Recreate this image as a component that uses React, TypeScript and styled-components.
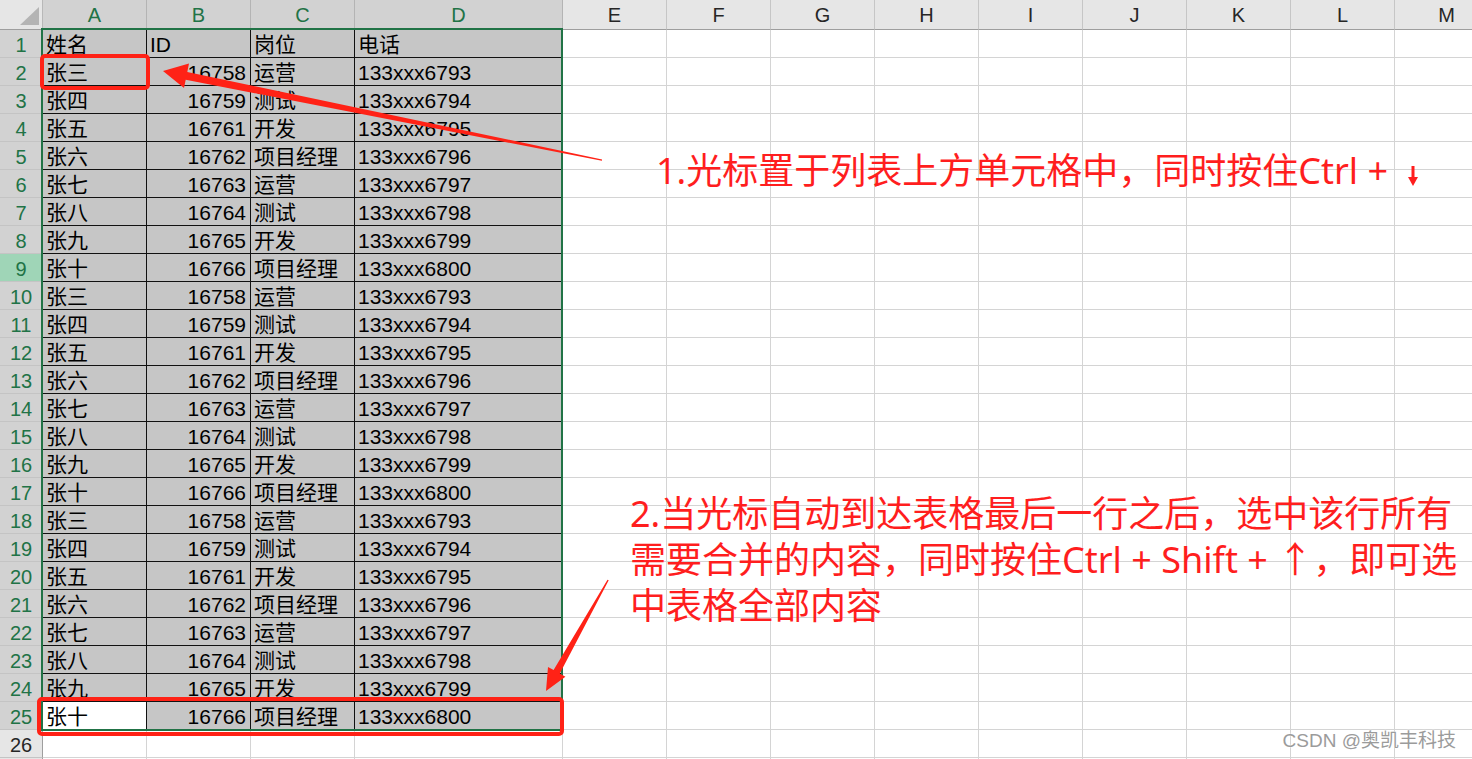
import React from 'react';
import styled, { createGlobalStyle } from 'styled-components';

const GlobalStyle = createGlobalStyle`
  html, body {
    margin: 0;
    padding: 0;
    background: #ffffff;
    overflow: hidden;
  }
  body {
    font-family: "Liberation Sans", "Noto Sans CJK SC", sans-serif;
  }
`;

const GREEN = '#217346';
const RED = '#ff2216';

const Page = styled.div`
  position: relative;
  width: 1472px;
  height: 759px;
  overflow: hidden;
  background: #ffffff;
`;

const Sheet = styled.div`
  display: grid;
  grid-template-columns: 43px 104px 104px 104px 208px repeat(10, 104px);
  grid-template-rows: 30px repeat(27, 28px);
  font-size: 21px;
  color: #000;
`;

const Corner = styled.div`
  box-sizing: border-box;
  background: #e6e6e6;
  border-right: 1px solid #b8b8b8;
  border-bottom: 1px solid #9e9e9e;
  display: flex;
  align-items: flex-end;
  justify-content: flex-end;
  padding: 0 3px 4px 0;
`;

const ColHeader = styled.div<{ $selected?: boolean }>`
  box-sizing: border-box;
  background: ${(p) => (p.$selected ? '#d2d2d2' : '#e6e6e6')};
  color: ${(p) => (p.$selected ? GREEN : '#262626')};
  border-right: 1px solid ${(p) => (p.$selected ? '#b4b4b4' : '#c6c6c6')};
  border-bottom: 1px solid #9e9e9e;
  display: flex;
  align-items: center;
  justify-content: center;
  padding-top: 2px;
  font-size: 20px;
`;

const RowHeader = styled.div<{ $selected?: boolean; $hover?: boolean }>`
  box-sizing: border-box;
  background: ${(p) => (p.$hover ? '#9fd5b7' : p.$selected ? '#d2d2d2' : '#e6e6e6')};
  color: ${(p) => (p.$selected ? GREEN : '#262626')};
  border-right: 1px solid #9e9e9e;
  border-bottom: 1px solid #c4c4c4;
  display: flex;
  align-items: center;
  justify-content: center;
  padding-top: 3px;
  font-size: 20px;
`;

const Cell = styled.div<{ $selected?: boolean; $active?: boolean; $right?: boolean }>`
  box-sizing: border-box;
  background: ${(p) => (p.$active ? '#ffffff' : p.$selected ? '#c6c6c6' : '#ffffff')};
  border-right: 1px solid ${(p) => (p.$selected ? '#111111' : '#d4d4d4')};
  border-bottom: 1px solid ${(p) => (p.$selected ? '#111111' : '#d4d4d4')};
  display: flex;
  align-items: flex-end;
  justify-content: ${(p) => (p.$right ? 'flex-end' : 'flex-start')};
  padding: 0 4px 0 3px;
  white-space: nowrap;
  overflow: visible;
  line-height: 25px;
`;

const SelectionFrame = styled.div`
  position: absolute;
  left: 41px;
  top: 28px;
  width: 522px;
  height: 703px;
  box-sizing: border-box;
  border: 2px solid ${GREEN};
  pointer-events: none;
`;

const RedBox = styled.div<{ $x: number; $y: number; $w: number; $h: number }>`
  position: absolute;
  left: ${(p) => p.$x}px;
  top: ${(p) => p.$y}px;
  width: ${(p) => p.$w}px;
  height: ${(p) => p.$h}px;
  box-sizing: border-box;
  border: 4px solid ${RED};
  border-radius: 5px;
  pointer-events: none;
`;

const Arrows = styled.svg`
  position: absolute;
  left: 0;
  top: 0;
  pointer-events: none;
`;

const Note = styled.div<{ $x: number; $y: number }>`
  position: absolute;
  left: ${(p) => p.$x}px;
  top: ${(p) => p.$y}px;
  color: #ff1e1e;
  font-family: "Noto Sans", "Noto Sans CJK SC", sans-serif;
  font-size: 36px;
  line-height: 46px;
  white-space: nowrap;
`;

const KeyArrow = styled.svg`
  display: inline-block;
  margin-left: 20px;
  vertical-align: -2px;
`;

const Watermark = styled.div`
  position: absolute;
  right: 16px;
  bottom: 7px;
  color: #9b9b9b;
  font-family: "Liberation Sans", "Noto Sans CJK SC", sans-serif;
  font-size: 19px;
  text-shadow: 0 0 1px #ffffff, 0 0 2px #ffffff;
  white-space: nowrap;
`;

const columns = ['A', 'B', 'C', 'D', 'E', 'F', 'G', 'H', 'I', 'J', 'K', 'L', 'M', 'N'];

const people = [
  ['张三', '16758', '运营', '133xxx6793'],
  ['张四', '16759', '测试', '133xxx6794'],
  ['张五', '16761', '开发', '133xxx6795'],
  ['张六', '16762', '项目经理', '133xxx6796'],
  ['张七', '16763', '运营', '133xxx6797'],
  ['张八', '16764', '测试', '133xxx6798'],
  ['张九', '16765', '开发', '133xxx6799'],
  ['张十', '16766', '项目经理', '133xxx6800'],
];

const header = ['姓名', 'ID', '岗位', '电话'];

const rowData = (row: number): string[] => {
  if (row === 1) return header;
  if (row >= 2 && row <= 25) return people[(row - 2) % people.length];
  return [];
};

const App: React.FC = () => {
  const rows = Array.from({ length: 27 }, (_, i) => i + 1);

  return (
    <Page>
      <GlobalStyle />
      <Sheet>
        <Corner>
          <svg width="19" height="18" viewBox="0 0 19 18">
            <polygon points="19,0 19,18 0,18" fill="#b4b4b4" />
          </svg>
        </Corner>
        {columns.map((c, i) => (
          <ColHeader key={c} $selected={i < 4}>
            {c}
          </ColHeader>
        ))}
        {rows.map((r) => {
          const data = rowData(r);
          const inSel = r <= 25;
          return (
            <React.Fragment key={r}>
              <RowHeader $selected={inSel} $hover={r === 9}>
                {r}
              </RowHeader>
              {columns.map((c, i) => (
                <Cell
                  key={c}
                  $selected={inSel && i < 4}
                  $active={r === 25 && i === 0}
                  $right={i === 1 && r > 1}
                >
                  {data[i] ?? ''}
                </Cell>
              ))}
            </React.Fragment>
          );
        })}
      </Sheet>

      <SelectionFrame />

      <RedBox $x={40} $y={54} $w={110} $h={36} />
      <RedBox $x={37} $y={697} $w={527} $h={39} />

      <Arrows width={1472} height={759} viewBox="0 0 1472 759">
        <polygon
          fill={RED}
          points="163,71 189,63.5 187.3,71.9 602.1,159.4 601.9,160.8 185.7,79.7 184,88"
        />
        <polygon
          fill={RED}
          points="546,691 548,666.9 553.6,670.1 607.5,579.7 608.7,580.3 559.8,673.5 565.4,676.7"
        />
      </Arrows>

      <Note $x={656} $y={148}>
        1.光标置于列表上方单元格中，同时按住Ctrl +
        <KeyArrow width="10" height="20" viewBox="0 0 10 20">
          <rect x="3.5" y="0" width="3" height="12" fill="#ff1e1e" />
          <polygon points="0,11 10,11 5,20" fill="#ff1e1e" />
        </KeyArrow>
      </Note>
      <Note $x={630} $y={491}>
        2.当光标自动到达表格最后一行之后，选中该行所有
        <br />
        需要合并的内容，同时按住Ctrl + Shift + ↑，即可选
        <br />
        中表格全部内容
      </Note>

      <Watermark>CSDN @奥凯丰科技</Watermark>
    </Page>
  );
};

export default App;
